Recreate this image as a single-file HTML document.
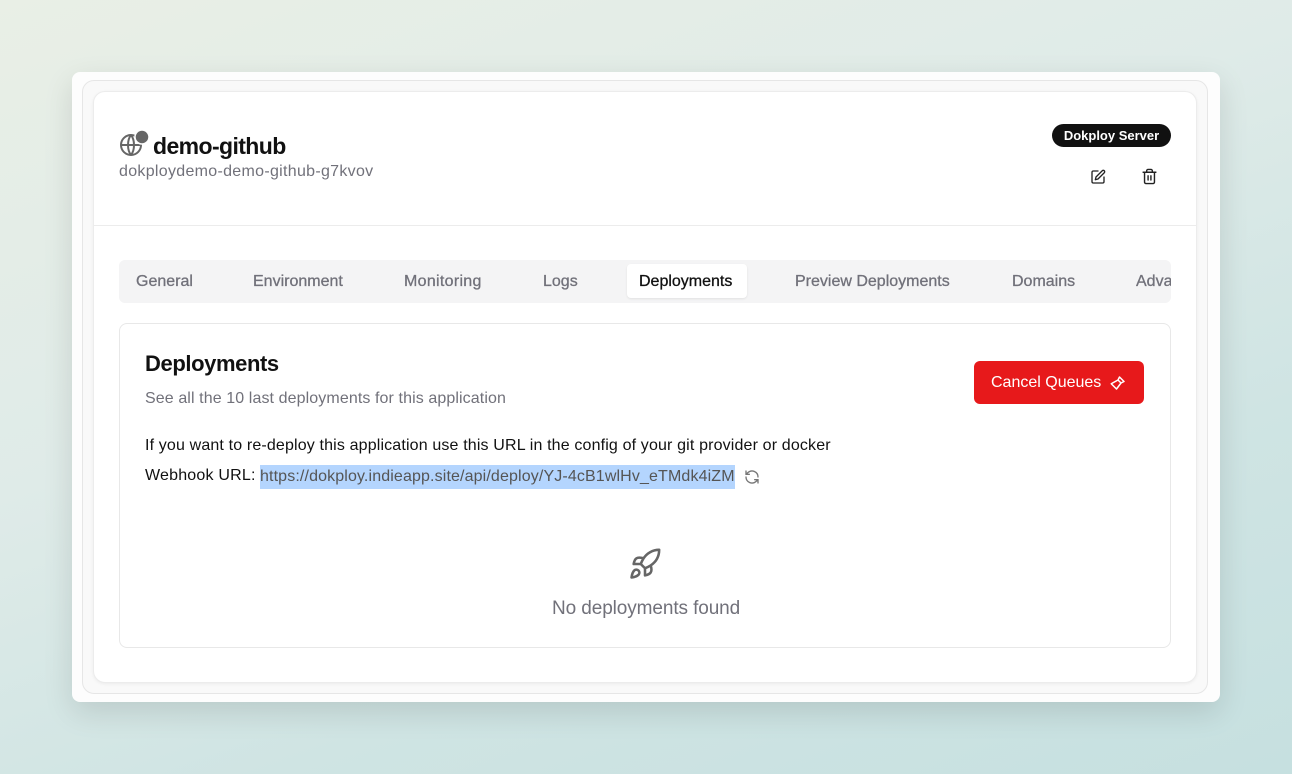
<!DOCTYPE html>
<html><head><meta charset="utf-8"><style>
*{box-sizing:border-box;margin:0;padding:0}
body{width:1292px;height:774px;overflow:hidden;font-family:"Liberation Sans",sans-serif;background:linear-gradient(160deg,#e9efe6 0%,#dfebe8 40%,#cfe4e3 70%,#c6e0e0 100%);position:relative}
.abs{position:absolute}
.f1{left:72px;top:72px;width:1148px;height:630px;background:#fdfdfd;border-radius:8px;box-shadow:0 10px 30px rgba(0,0,0,.12)}
.f2{left:82px;top:80px;width:1126px;height:614px;border:1px solid #e6e6e6;border-radius:12px;background:#f9f9f9}
.card{left:93px;top:91px;width:1104px;height:592px;background:#fff;border-radius:12px;border:1px solid #ececec;box-shadow:0 1px 3px rgba(0,0,0,.06)}
.t{position:absolute;white-space:nowrap}
</style></head><body>
<div class="abs f1"></div><div class="abs f2"></div>
<div class="abs card"></div>
<svg class="abs" style="left:119px;top:130px" width="32" height="28" viewBox="0 0 32 28"><g fill="none" stroke="#666" stroke-width="2"><circle cx="12" cy="15" r="10"/><path d="M2 15h20M12 5c-4 5-4 15 0 20M12 5c4 5 4 15 0 20"/></g><circle cx="23" cy="7" r="7" fill="#666" stroke="#fff" stroke-width="1.5"/></svg>
<div class="t" style="left:153px;top:133px;font-size:23px;font-weight:bold;color:#111;letter-spacing:-.6px">demo-github</div>
<div class="t" style="left:119px;top:163px;font-size:16px;color:#71717a;letter-spacing:.3px">dokploydemo-demo-github-g7kvov</div>
<div class="abs" style="left:1052px;top:124px;width:119px;height:23px;background:#111;border-radius:12px;color:#fff;font-size:13px;font-weight:bold;text-align:center;line-height:23px">Dokploy Server</div>
<svg class="abs" style="left:1090px;top:169px" width="16" height="16" viewBox="0 0 24 24" fill="none" stroke="#222" stroke-width="2" stroke-linecap="round" stroke-linejoin="round"><path d="M12 3H5a2 2 0 0 0-2 2v14a2 2 0 0 0 2 2h14a2 2 0 0 0 2-2v-7"/><path d="M18.4 2.6a2.1 2.1 0 0 1 3 3L12 15l-4 1 1-4z"/></svg>
<svg class="abs" style="left:1141px;top:168px" width="17" height="17" viewBox="0 0 24 24" fill="none" stroke="#222" stroke-width="2" stroke-linecap="round"><path d="M3 6h18M19 6v14a2 2 0 0 1-2 2H7a2 2 0 0 1-2-2V6M8 6V4a2 2 0 0 1 2-2h4a2 2 0 0 1 2 2v2M10 11v6M14 11v6"/></svg>
<div class="abs" style="left:94px;top:225px;width:1102px;height:1px;background:#ececec"></div>
<div class="abs" style="left:119px;top:260px;width:1052px;height:43px;background:#f4f4f5;border-radius:6px"></div>
<div class="abs" style="left:627px;top:264px;width:120px;height:34px;background:#fff;border-radius:4px;box-shadow:0 1px 2px rgba(0,0,0,.08)"></div>
<div style="font-size:16px;color:#71717a;font-weight:bold;-webkit-text-stroke:0">
<div class="t" style="left:136px;top:273px;font-weight:normal;-webkit-text-stroke:.3px #71717a">General</div>
<div class="t" style="left:253px;top:273px;font-weight:normal;-webkit-text-stroke:.3px #71717a">Environment</div>
<div class="t" style="left:404px;top:273px;font-weight:normal;-webkit-text-stroke:.3px #71717a;letter-spacing:.3px">Monitoring</div>
<div class="t" style="left:543px;top:273px;font-weight:normal;-webkit-text-stroke:.3px #71717a">Logs</div>
<div class="t" style="left:639px;top:273px;color:#111;font-weight:normal;-webkit-text-stroke:.3px #111">Deployments</div>
<div class="t" style="left:795px;top:273px;font-weight:normal;-webkit-text-stroke:.3px #71717a">Preview Deployments</div>
<div class="t" style="left:1012px;top:273px;font-weight:normal;-webkit-text-stroke:.3px #71717a">Domains</div>
<div class="t" style="left:1136px;top:273px;width:35px;overflow:hidden;font-weight:normal;-webkit-text-stroke:.3px #71717a">Advanced</div>
</div>
<div class="abs" style="left:119px;top:323px;width:1052px;height:325px;border:1px solid #e8e8e8;border-radius:8px"></div>
<div class="t" style="left:145px;top:351px;font-size:22px;font-weight:bold;color:#111;letter-spacing:-.4px">Deployments</div>
<div class="t" style="left:145px;top:390px;font-size:16px;color:#71717a;letter-spacing:.1px">See all the 10 last deployments for this application</div>
<div class="abs" style="left:974px;top:361px;width:170px;height:43px;background:#e7191b;border-radius:6px;color:#fff;font-size:16px;line-height:43px;padding-left:17px">Cancel Queues</div>
<svg class="abs" style="left:1109px;top:374px" width="18" height="18" viewBox="0 0 24 24" fill="none" stroke="#fff" stroke-width="2" stroke-linejoin="round"><path d="M14 4l6 6-4 2-4-4zM12 8l4 4-6 8-7-7z"/></svg>
<div class="t" style="left:145px;top:437px;font-size:16px;color:#111;letter-spacing:.15px">If you want to re-deploy this application use this URL in the config of your git provider or docker</div>
<div class="t" style="left:145px;top:467px;font-size:16px;color:#111;letter-spacing:.2px">Webhook URL:</div>
<div class="t" style="left:260px;top:465px;font-size:16px;color:#555;background:#b4d5fe;padding:2px 0;line-height:20px;letter-spacing:.13px">https://dokploy.indieapp.site/api/deploy/YJ-4cB1wlHv_eTMdk4iZM</div>
<svg class="abs" style="left:744px;top:469px" width="16" height="16" viewBox="0 0 24 24" fill="none" stroke="#777" stroke-width="2" stroke-linecap="round"><path d="M21 12a9 9 0 0 0-15-6.7L3 8M3 3v5h5M3 12a9 9 0 0 0 15 6.7L21 16M21 21v-5h-5"/></svg>
<svg class="abs" style="left:628px;top:547px" width="34" height="34" viewBox="0 0 24 24" fill="none" stroke="#666" stroke-width="1.8" stroke-linejoin="round"><path d="M4.5 16.5c-1.5 1.3-2 5-2 5s3.7-.5 5-2c.7-.8.7-2.1-.1-2.9a2.2 2.2 0 0 0-2.9-.1zM12 15l-3-3a22 22 0 0 1 2-4A13 13 0 0 1 22 2c0 2.7-.8 7.5-6 11a22 22 0 0 1-4 2zM9 12H4s.5-3 2-4c1.6-1.1 5 0 5 0M12 15v5s3-.5 4-2c1.1-1.6 0-5 0-5"/></svg>
<div class="t" style="left:552px;top:598px;font-size:19px;color:#71717a;letter-spacing:-.1px">No deployments found</div>
</body></html>
